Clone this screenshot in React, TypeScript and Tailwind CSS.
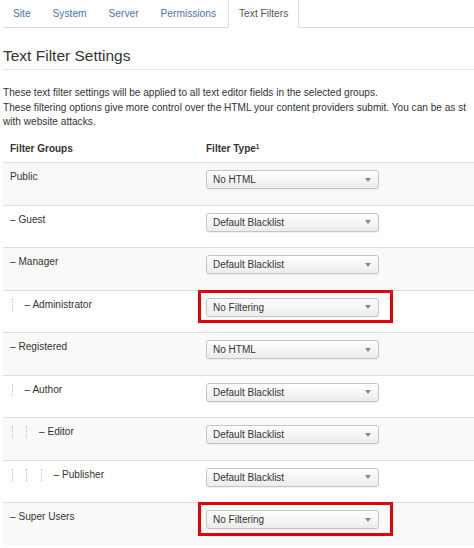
const tabs = ['Site', 'System', 'Server', 'Permissions', 'Text Filters'];

type Row = { label: string; depth: number; dash: boolean; value: string; mark?: boolean };

const rows: Row[] = [
  { label: 'Public', depth: 0, dash: false, value: 'No HTML' },
  { label: 'Guest', depth: 0, dash: true, value: 'Default Blacklist' },
  { label: 'Manager', depth: 0, dash: true, value: 'Default Blacklist' },
  { label: 'Administrator', depth: 1, dash: true, value: 'No Filtering', mark: true },
  { label: 'Registered', depth: 0, dash: true, value: 'No HTML' },
  { label: 'Author', depth: 1, dash: true, value: 'Default Blacklist' },
  { label: 'Editor', depth: 2, dash: true, value: 'Default Blacklist' },
  { label: 'Publisher', depth: 3, dash: true, value: 'Default Blacklist' },
  { label: 'Super Users', depth: 0, dash: true, value: 'No Filtering', mark: true },
];

function Select({ value }: { value: string }) {
  return (
    <div className="flex h-[19px] w-[173px] items-center rounded-[3px] border border-[#c5c5c5] bg-gradient-to-b from-white to-[#ececec] pl-[6px] pr-[7px] text-[10px] text-[#333] shadow-[0_1px_1px_rgba(0,0,0,0.06)]">
      <span>{value}</span>
      <svg className="ml-auto" width="6" height="4" viewBox="0 0 6 4">
        <path d="M0 0h6L3 4z" fill="#8a8a8a" />
      </svg>
    </div>
  );
}

export default function App() {
  return (
    <div className="h-[548px] w-[474px] overflow-hidden bg-white font-['Liberation_Sans',Arial,sans-serif] text-[#333]">
      <div className="ml-[3px] flex h-[28px] border-b border-[#ddd] text-[10.2px]">
        {tabs.map((tab) =>
          tab === 'Text Filters' ? (
            <div key={tab} className="-mb-px h-[28px] border-x border-[#ddd] bg-white px-[10px] leading-[27px] text-[#555]">
              {tab}
            </div>
          ) : (
            <div key={tab} className="mr-[2px] px-[10px] leading-[27px] text-[#4a74a8]">
              {tab}
            </div>
          ),
        )}
      </div>

      <div className="ml-[3px] mt-[18px] border-b border-[#e5e5e5] pb-[4px]">
        <h2 className="text-[15.5px] font-normal leading-[19px]">Text Filter Settings</h2>
      </div>

      <div className="ml-[3px] mt-[16px] whitespace-nowrap text-[10.1px] leading-[14.5px]">
        <p>These text filter settings will be applied to all text editor fields in the selected groups.</p>
        <p>These filtering options give more control over the HTML your content providers submit. You can be as st</p>
        <p>with website attacks.</p>
      </div>

      <div className="ml-[3px] mt-[5px]">
        <div className="flex h-[27.5px] items-center text-[10px] font-bold">
          <div className="w-[196px] pl-[7px]">Filter Groups</div>
          <div className="pl-[7px]">
            Filter Type<sup className="text-[6.5px]">1</sup>
          </div>
        </div>
        {rows.map((row, i) => (
          <div
            key={row.label}
            className={`relative flex h-[42.5px] border-t border-[#ddd] ${i % 2 === 0 ? 'bg-[#f9f9f9]' : 'bg-white'}`}
          >
            <div className="flex w-[196px] pl-[7px] pt-[8px] text-[10.1px] leading-[12px]">
              {Array.from({ length: row.depth }).map((_, k) => (
                <span key={k} className="flex h-[12px] w-[14.5px] shrink-0 pl-[1.5px]">
                  <span className="h-[12px] border-l border-dotted border-[#c2c2c2]" />
                </span>
              ))}
              <span>
                {row.dash ? '– ' : ''}
                {row.label}
              </span>
            </div>
            <div className="pl-[7px] pt-[7px]">
              <Select value={row.value} />
            </div>
            {row.mark && (
              <div className="absolute left-[195px] top-[-1px] h-[33.5px] w-[195px] border-[3px] border-[#e3000b]" />
            )}
          </div>
        ))}
      </div>
    </div>
  );
}
